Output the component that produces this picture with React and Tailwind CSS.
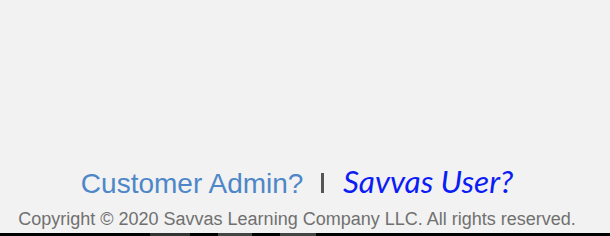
import React from 'react';

const App = () => {
  return (
    <div className="h-[236px] w-[610px] bg-[#f2f2f2] flex flex-col overflow-hidden">
      <div className="flex-1" />
      <div className="w-[594px] flex flex-col items-center">
        <div className="flex items-baseline">
          <a className="text-[28px] text-[#4e87c8] font-['Liberation_Sans',Arial,sans-serif] leading-none">
            Customer Admin?
          </a>
          <span className="ml-[18px] mr-[19px] w-[2.5px] h-[20px] bg-[#555]" />
          <a className="text-[31.5px] italic text-[#0b1cf5] font-['Lato',sans-serif] leading-none">
            Savvas User?
          </a>
        </div>
        <p className="mt-[12.5px] text-[18px] text-[#707070] font-['Liberation_Sans',Arial,sans-serif] leading-none">
          Copyright © 2020 Savvas Learning Company LLC. All rights reserved.
        </p>
      </div>
      <div className="mt-[5px] h-[3px] bg-black flex">
        <div className="ml-[150px] w-[40px] bg-[#333]" />
        <div className="ml-[28px] w-[34px] bg-[#444]" />
        <div className="ml-[28px] w-[36px] bg-[#444]" />
      </div>
    </div>
  );
};

export default App;
